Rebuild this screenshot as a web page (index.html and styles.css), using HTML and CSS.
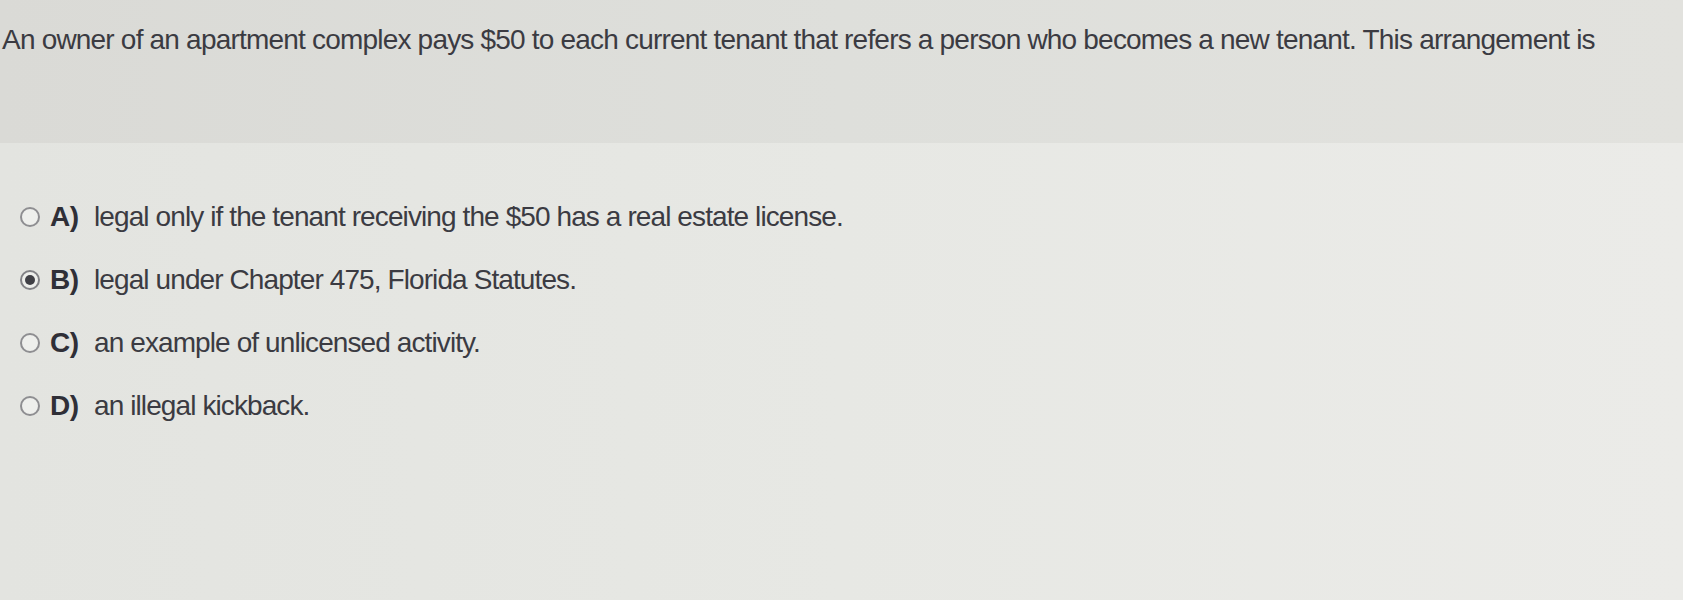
FILE: index.html
```html
<!DOCTYPE html>
<html lang="en">
<head>
<meta charset="utf-8">
<title>Question</title>
<link rel="stylesheet" href="styles.css">
</head>
<body>
<div class="page">
  <div class="stem">
    <p class="question">An owner of an apartment complex pays $50 to each current tenant that refers a person who becomes a new tenant. This arrangement is</p>
  </div>
  <div class="options">
    <label class="option">
      <span class="radio"></span>
      <span class="letter">A)</span>
      <span class="text">legal only if the tenant receiving the $50 has a real estate license.</span>
    </label>
    <label class="option">
      <span class="radio checked"></span>
      <span class="letter">B)</span>
      <span class="text">legal under Chapter 475, Florida Statutes.</span>
    </label>
    <label class="option">
      <span class="radio"></span>
      <span class="letter">C)</span>
      <span class="text">an example of unlicensed activity.</span>
    </label>
    <label class="option">
      <span class="radio"></span>
      <span class="letter">D)</span>
      <span class="text">an illegal kickback.</span>
    </label>
  </div>
</div>
</body>
</html>
```

FILE: styles.css
```css
html, body {
  margin: 0;
  padding: 0;
}
body {
  width: 1683px;
  height: 600px;
  overflow: hidden;
  font-family: "Liberation Sans", Arial, sans-serif;
  color: #3b3b42;
  background: linear-gradient(90deg, #e3e4e0 0%, #e7e8e4 50%, #ebebe8 100%);
}
.page {
  display: flex;
  flex-direction: column;
}
.stem {
  height: 143px;
  box-sizing: border-box;
  padding: 23px 0 0 2px;
  background: linear-gradient(90deg, #dadad6 0%, #dedfdb 50%, #e2e2de 100%);
}
.question {
  margin: 0;
  font-size: 28px;
  line-height: 34px;
  letter-spacing: -0.8px;
  white-space: nowrap;
}
.options {
  display: flex;
  flex-direction: column;
  padding: 42px 0 0 20px;
}
.option {
  display: flex;
  align-items: center;
  height: 63px;
  font-size: 28px;
}
.radio {
  width: 16px;
  height: 16px;
  border-radius: 50%;
  border: 2px solid #8e8e91;
  background: #eeefec;
  flex: none;
  display: flex;
  align-items: center;
  justify-content: center;
}
.radio.checked {
  border-color: #828286;
}
.radio.checked::after {
  content: "";
  width: 10px;
  height: 10px;
  border-radius: 50%;
  background: #404046;
}
.letter {
  font-weight: bold;
  margin-left: 10px;
  width: 44px;
  color: #2f2f37;
  letter-spacing: -0.5px;
}
.text {
  color: #3b3b42;
  letter-spacing: -0.9px;
}
```
